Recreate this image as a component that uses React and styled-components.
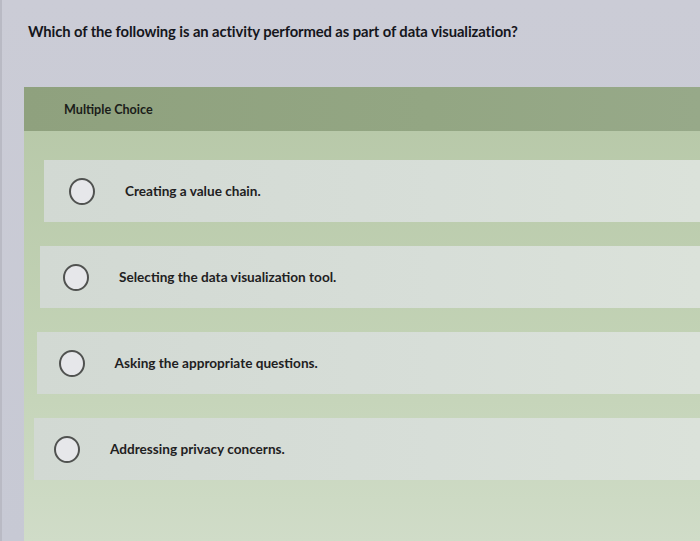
import React from 'react';
import styled, { createGlobalStyle } from 'styled-components';

const GlobalStyle = createGlobalStyle`
  html, body {
    margin: 0;
    padding: 0;
    background: #c9cad5;
  }
  body {
    font-family: Lato, "Liberation Sans", Arial, sans-serif;
  }
`;

const options = [
  { text: 'Creating a value chain.', shift: 0 },
  { text: 'Selecting the data visualization tool.', shift: 4 },
  { text: 'Asking the appropriate questions.', shift: 7 },
  { text: 'Addressing privacy concerns.', shift: 10 },
];

const App = () => (
  <Page>
    <GlobalStyle />
    <Question>Which of the following is an activity performed as part of data visualization?</Question>
    <Panel>
      <PanelHeader>Multiple Choice</PanelHeader>
      <OptionList>
        {options.map((o) => (
          <OptionRow key={o.text} $shift={o.shift}>
            <Radio />
            <OptionText>{o.text}</OptionText>
          </OptionRow>
        ))}
      </OptionList>
    </Panel>
  </Page>
);

export default App;

const Page = styled.div`
  width: 700px;
  height: 541px;
  overflow: hidden;
  display: flex;
  flex-direction: column;
  background: linear-gradient(180deg, #cbccd6 0%, #c7c9d4 100%);
  border-left: 2px solid #b9bac4;
  box-sizing: border-box;
`;

const Question = styled.h1`
  margin: 0;
  padding: 22px 0 0 26px;
  height: 87px;
  flex-shrink: 0;
  box-sizing: border-box;
  font-size: 14.8px;
  font-weight: 700;
  color: #15161c;
  letter-spacing: -0.1px;
`;

const Panel = styled.section`
  flex: 1;
  margin-left: 22px;
  display: flex;
  flex-direction: column;
  background: linear-gradient(180deg, #b6c7a7 0%, #c3d3b6 60%, #d0dcc8 100%);
`;

const PanelHeader = styled.div`
  height: 44px;
  flex-shrink: 0;
  display: flex;
  align-items: center;
  padding-left: 40px;
  background: linear-gradient(90deg, #8fa17e 0%, #93a683 60%, #97a989 100%);
  font-size: 12.6px;
  font-weight: 700;
  color: #1b1d1a;
`;

const OptionList = styled.div`
  display: flex;
  flex-direction: column;
  gap: 24px;
  padding-top: 29px;
`;

const OptionRow = styled.div`
  height: 62px;
  margin-left: ${(p) => 20 - p.$shift}px;
  display: flex;
  align-items: center;
  gap: 30px;
  padding-left: ${(p) => 25 - p.$shift / 2}px;
  background: linear-gradient(90deg, #d2d9d3 0%, #d7ded8 60%, #dbe2da 100%);
`;

const Radio = styled.span`
  width: 22px;
  height: 23px;
  border-radius: 50%;
  border: 2px solid #505250;
  background: #e6e7ea;
  flex-shrink: 0;
`;

const OptionText = styled.span`
  font-size: 13.6px;
  font-weight: 700;
  color: #1f211f;
`;
